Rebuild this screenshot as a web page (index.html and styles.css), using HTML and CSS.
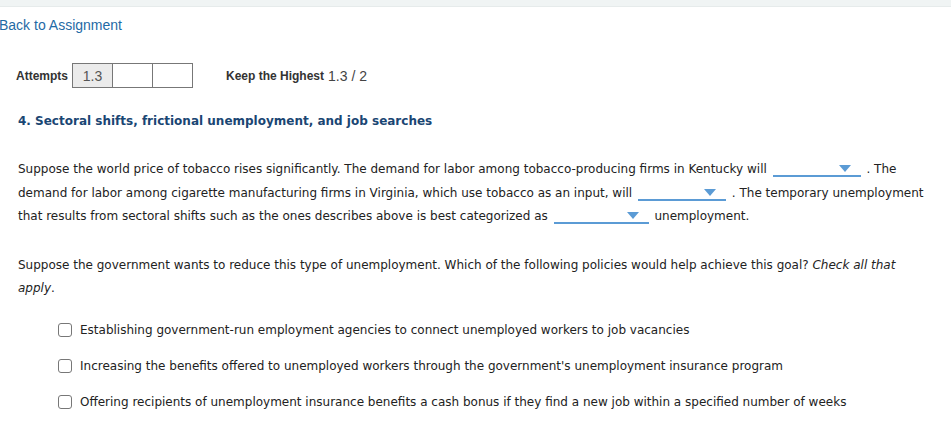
FILE: index.html
```html
<!DOCTYPE html>
<html lang="en">
  <head>
    <meta charset="UTF-8" />
    <title>Assignment</title>
    <link rel="stylesheet" href="styles.css">
  </head>
  <body>
    <div class="top-bar"></div>
    <a href="#" class="back-link">Back to Assignment</a>

    <div class="attempts">
      <span class="label">Attempts</span>
      <div class="boxes">
        <span class="box filled">1.3</span>
        <span class="box"></span>
        <span class="box"></span>
      </div>
      <span class="label keep">Keep the Highest</span>
      <span class="score">1.3 / 2</span>
    </div>

    <h2 class="question-title">4. Sectoral shifts, frictional unemployment, and job searches</h2>

    <p class="text first">
      Suppose the world price of tobacco rises significantly. The demand for labor among tobacco-producing firms in Kentucky will
      <span class="dropdown w88"></span> . The demand for labor among cigarette manufacturing firms in Virginia, which use tobacco as an input, will
      <span class="dropdown w88"></span> . The temporary unemployment that results from sectoral shifts such as the ones describes above is best categorized as
      <span class="dropdown w95"></span> unemployment.
    </p>

    <p class="text">
      Suppose the government wants to reduce this type of unemployment. Which of the following policies would help achieve this goal? <em>Check all that apply</em>.
    </p>

    <ul class="choices">
      <li><span class="check"></span>Establishing government-run employment agencies to connect unemployed workers to job vacancies</li>
      <li><span class="check"></span>Increasing the benefits offered to unemployed workers through the government's unemployment insurance program</li>
      <li><span class="check"></span>Offering recipients of unemployment insurance benefits a cash bonus if they find a new job within a specified number of weeks</li>
    </ul>
  </body>
</html>
```

FILE: styles.css
```css
body {
  margin: 0;
  font-family: "DejaVu Sans", Verdana, sans-serif;
  color: #222;
  background: #fff;
}
.top-bar {
  height: 6px;
  background-color: #f0f4f4;
  border-bottom: 1px solid #e6ebeb;
}
.back-link {
  display: block;
  margin: 10px 0 0 -1px;
  font-family: "Liberation Sans", Arial, sans-serif;
  font-size: 14px;
  color: #1f6aa5;
  text-decoration: none;
}
.attempts {
  display: flex;
  align-items: center;
  margin: 30px 0 0 16px;
  font-family: "Liberation Sans", Arial, sans-serif;
  font-size: 12px;
  color: #333;
}
.attempts .label {
  font-weight: bold;
}
.boxes {
  display: flex;
  margin-left: 4px;
}
.box {
  width: 39px;
  height: 23px;
  border: 1px solid #777;
  margin-right: -1px;
  display: flex;
  align-items: center;
  justify-content: center;
  font-size: 14px;
  color: #555;
}
.box.filled {
  background-color: #ebebeb;
}
.keep {
  margin-left: 34px;
}
.score {
  margin-left: 4px;
  font-size: 14px;
  color: #444;
}
.question-title {
  margin: 26px 0 0 18px;
  font-size: 12px;
  font-weight: bold;
  color: #1a4673;
}
.text {
  margin: 25px 18px 0 18px;
  font-size: 12px;
  line-height: 23.5px;
  color: #222;
}
.text.first {
  margin-top: 30px;
}
.text em {
  font-style: italic;
}
.dropdown {
  display: inline-block;
  position: relative;
  height: 14px;
  border-bottom: 2px solid #5b9bd5;
  vertical-align: -4px;
  margin: 0 2px;
}
.dropdown::after {
  content: "";
  position: absolute;
  right: 10px;
  top: 4px;
  border-left: 6px solid transparent;
  border-right: 6px solid transparent;
  border-top: 7px solid #5b9bd5;
}
.w88 { width: 88px; }
.w95 { width: 95px; }
.choices {
  list-style: none;
  margin: 11px 0 0 58px;
  padding: 0;
  font-size: 12px;
  color: #222;
}
.choices li {
  display: flex;
  align-items: center;
  height: 36px;
}
.check {
  width: 12px;
  height: 12px;
  border: 1px solid #777;
  border-radius: 3px;
  margin-right: 8px;
}
```
